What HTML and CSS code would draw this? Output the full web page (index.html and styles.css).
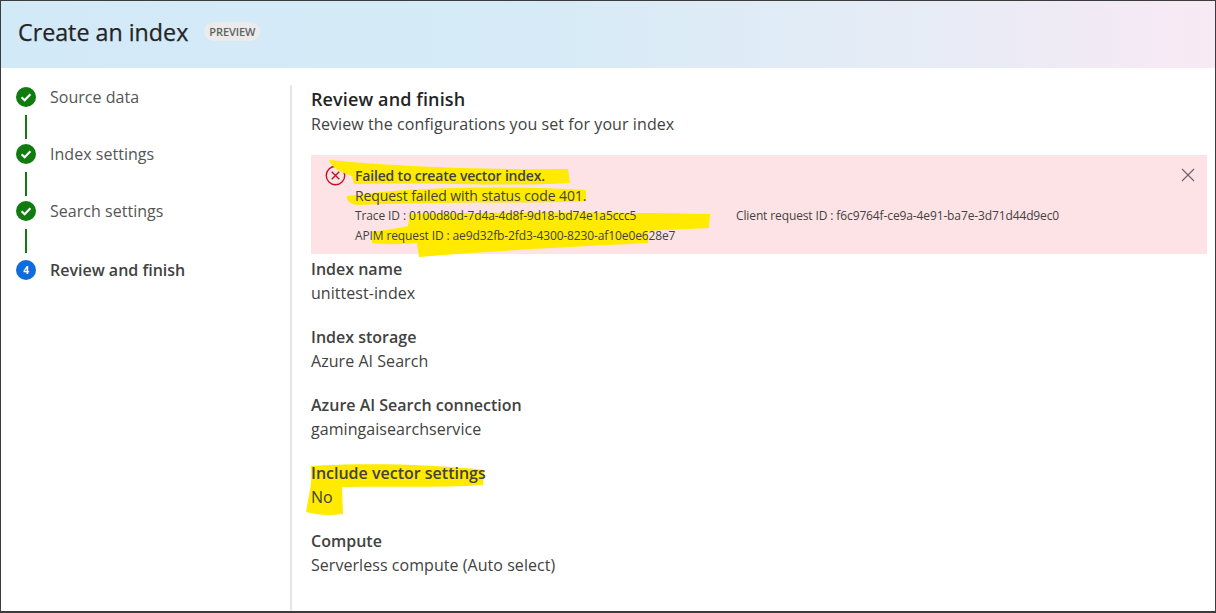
FILE: index.html
```html
<!DOCTYPE html>
<html lang="en">
<head>
<meta charset="utf-8">
<title>Create an index</title>
<link rel="stylesheet" href="styles.css">
</head>
<body>
<div class="frame">
  <header class="header">
    <h1 class="title">Create an index</h1>
    <span class="badge">PREVIEW</span>
  </header>
  <div class="body">
    <nav class="steps">
      <div class="step">
        <svg class="step-icon" viewBox="0 0 20 20"><circle cx="10" cy="10" r="10" fill="#107c10"/><path d="M5.6 10.3l3 2.9 5.8-6" fill="none" stroke="#fff" stroke-width="2.2"/></svg>
        <span class="step-label">Source data</span>
      </div>
      <div class="connector"></div>
      <div class="step">
        <svg class="step-icon" viewBox="0 0 20 20"><circle cx="10" cy="10" r="10" fill="#107c10"/><path d="M5.6 10.3l3 2.9 5.8-6" fill="none" stroke="#fff" stroke-width="2.2"/></svg>
        <span class="step-label">Index settings</span>
      </div>
      <div class="connector"></div>
      <div class="step">
        <svg class="step-icon" viewBox="0 0 20 20"><circle cx="10" cy="10" r="10" fill="#107c10"/><path d="M5.6 10.3l3 2.9 5.8-6" fill="none" stroke="#fff" stroke-width="2.2"/></svg>
        <span class="step-label">Search settings</span>
      </div>
      <div class="connector"></div>
      <div class="step step-current">
        <span class="step-num">4</span>
        <span class="step-label">Review and finish</span>
      </div>
    </nav>
    <main class="main">
      <h2 class="main-title">Review and finish</h2>
      <p class="main-sub">Review the configurations you set for your index</p>
      <section class="alert">
        <svg class="alert-icon" viewBox="0 0 20 20"><circle cx="10" cy="10" r="8.8" fill="none" stroke="#c50f1f" stroke-width="1.3"/><path d="M6.4 6.4l7.2 7.2M13.6 6.4l-7.2 7.2" stroke="#c50f1f" stroke-width="1.3"/></svg>
        <div class="alert-body">
          <div class="alert-title">Failed to create vector index.</div>
          <div class="alert-msg">Request failed with status code 401.</div>
          <div class="alert-ids">
            <span>Trace ID : 0100d80d-7d4a-4d8f-9d18-bd74e1a5ccc5</span>
            <span>Client request ID : f6c9764f-ce9a-4e91-ba7e-3d71d44d9ec0</span>
            <span>APIM request ID : ae9d32fb-2fd3-4300-8230-af10e0e628e7</span>
          </div>
        </div>
        <svg class="alert-close" viewBox="0 0 14 14"><path d="M1 1l12 12M13 1L1 13" stroke="#6b6363" stroke-width="1.1" fill="none"/></svg>
      </section>
      <dl class="fields">
        <div class="field"><dt>Index name</dt><dd>unittest-index</dd></div>
        <div class="field"><dt>Index storage</dt><dd>Azure AI Search</dd></div>
        <div class="field"><dt>Azure AI Search connection</dt><dd>gamingaisearchservice</dd></div>
        <div class="field"><dt>Include vector settings</dt><dd>No</dd></div>
        <div class="field"><dt>Compute</dt><dd>Serverless compute (Auto select)</dd></div>
      </dl>
    </main>
  </div>
  <svg class="marker" viewBox="0 0 1216 613" width="1216" height="613">
    <g fill="#ffea00">
      <path d="M329 160 C390 166 480 170 568 169 L570 183 C500 187 450 182 354 184 L352 176 C340 172 332 168 329 160Z"/>
      <path d="M347 196 C420 186 510 186 586 190 L586 201 C540 204 450 201 357 205 C350 204 346 200 347 196Z"/>
      <path d="M410 214 C500 212 620 212 710 214 L709 228 C690 229 660 230 648 231 L648 243 C590 246 500 250 419 257 L417 243 C400 244 385 245 372 243 L372 232 C385 230 400 228 408 226Z"/>
      <path d="M311 466 C360 463 430 464 484 470 L483 485 C440 488 380 486 342 487 L343 514 C330 516 318 515 306 512 L310 490 C312 480 311 472 311 466Z"/>
    </g>
  </svg>
</div>
</body>
</html>
```
FILE: styles.css
```css
* { box-sizing: border-box; margin: 0; padding: 0; }
html, body { width: 1216px; height: 613px; overflow: hidden; background: #fff; }
body { font-family: "Open Sans", "Noto Sans", "Liberation Sans", sans-serif; color: #424242; }
.frame {
  position: relative;
  width: 1216px;
  height: 613px;
  border: 1px solid #3c3c3c;
  border-width: 1px 1px 2px 1px;
  display: flex;
  flex-direction: column;
  overflow: hidden;
}
.header {
  height: 67px;
  flex: none;
  display: flex;
  align-items: center;
  gap: 16px;
  padding: 0 0 5px 17px;
  background: linear-gradient(90deg, #d2e9f8 0%, #d6ebf7 45%, #e6ecf6 75%, #f8e9f4 100%);
}
.title { font-size: 23.25px; font-weight: 400; color: #242424; line-height: 30px; -webkit-text-stroke: 0.25px #242424; }
.badge {
  font-size: 11px;
  font-weight: 600;
  line-height: 19px;
  height: 19px;
  padding: 0 5px;
  border-radius: 10px;
  background: #ebebeb;
  color: #616161;
  letter-spacing: -0.1px;
  margin-top: -1px;
}
.body { flex: 1; display: flex; padding-top: 17px; min-height: 0; }
.steps {
  width: 289px;
  flex: none;
  padding: 2px 0 0 15px;
  display: flex;
  flex-direction: column;
}
.step { display: flex; align-items: center; gap: 14px; height: 20px; }
.step-icon { width: 20px; height: 20px; flex: none; }
.step-num {
  width: 20px; height: 20px; flex: none;
  border-radius: 50%;
  background: #0f6cdc;
  color: #fff;
  font-size: 10px;
  font-weight: 700;
  line-height: 20px;
  text-align: center;
}
.step-label { font-size: 16px; color: #555; letter-spacing: 0.03px; }
.step-current .step-label { font-weight: 600; color: #424242; letter-spacing: 0; }
.connector { width: 2px; height: 24px; background: #107c10; margin: 8px 0 5px 9px; flex: none; }
.step-current { margin-top: 2px; }
.main { flex: 1; border-left: 2px solid #e6e6e6; padding: 2px 8px 0 19px; min-width: 0; }
.main-title { font-size: 18px; font-weight: 600; color: #242424; line-height: 24px; letter-spacing: 0.12px; }
.main-sub { font-size: 16px; color: #424242; line-height: 22px; letter-spacing: 0.08px; margin-top: 2px; }
.alert {
  display: flex;
  height: 99px;
  margin-top: 20px;
  background: #fde3e6;
  padding: 11px 12px 0 14px;
}
.alert-icon { width: 21px; height: 21px; flex: none; margin-top: -1px; }
.alert-body { flex: 1; margin-left: 9px; min-width: 0; }
.alert-title, .alert-msg, .alert-ids, .field dt, .field dd { position: relative; z-index: 2; }
.alert-title { font-size: 14px; font-weight: 600; line-height: 20px; color: #424242; letter-spacing: -0.18px; }
.alert-msg { font-size: 14px; line-height: 20px; color: #424242; letter-spacing: -0.08px; }
.alert-ids {
  display: grid;
  grid-template-columns: 381px 1fr;
  font-size: 12px;
  line-height: 20px;
  color: #424242;
  letter-spacing: -0.12px;
}
.alert-close { width: 14px; height: 14px; flex: none; margin-top: 2px; }
.fields { margin-top: 0; }
.field { height: 68px; padding-top: 3px; }
.field dt { font-size: 16px; font-weight: 600; color: #424242; line-height: 24px; }
.field dd { font-size: 16px; color: #424242; line-height: 24px; letter-spacing: 0.05px; }
.marker { position: absolute; left: -1px; top: -1px; z-index: 1; pointer-events: none; }
```
